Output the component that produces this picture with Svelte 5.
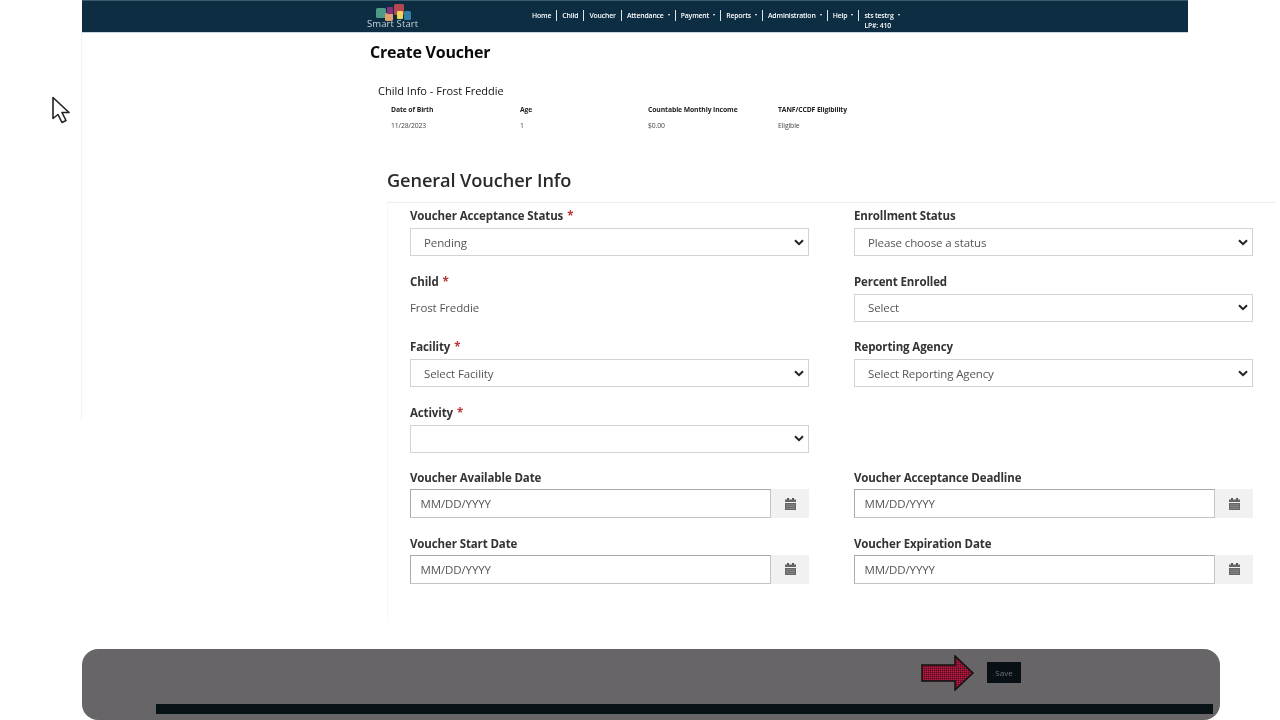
<script>
	const navItems = [
		{ name: "Home" },
		{ name: "Child" },
		{ name: "Voucher" },
		{ name: "Attendance", menu: true },
		{ name: "Payment", menu: true },
		{ name: "Reports", menu: true },
		{ name: "Administration", menu: true },
		{ name: "Help", menu: true }
	];

	const childInfo = [
		{ label: "Date of Birth", value: "11/28/2023" },
		{ label: "Age", value: "1" },
		{ label: "Countable Monthly Income", value: "$0.00" },
		{ label: "TANF/CCDF Eligibility", value: "Eligible" }
	];

	const fields = [
		{ label: "Voucher Acceptance Status", required: true, type: "select", value: "Pending" },
		{ label: "Enrollment Status", type: "select", value: "Please choose a status" },
		{ label: "Child", required: true, type: "static", value: "Frost Freddie" },
		{ label: "Percent Enrolled", type: "select", value: "Select" },
		{ label: "Facility", required: true, type: "select", value: "Select Facility" },
		{ label: "Reporting Agency", type: "select", value: "Select Reporting Agency" },
		{ label: "Activity", required: true, type: "select", value: "" },
		{ type: "empty" },
		{ label: "Voucher Available Date", type: "date" },
		{ label: "Voucher Acceptance Deadline", type: "date" },
		{ label: "Voucher Start Date", type: "date" },
		{ label: "Voucher Expiration Date", type: "date" }
	];
</script>

<div class="page">
	<header class="topbar">
		<div class="logo">
			<svg width="46" height="17" viewBox="0 0 46 17">
				<rect x="9" y="4" width="10" height="10" rx="1.5" fill="#4f9a86" />
				<rect x="18" y="9" width="8" height="8" rx="1.5" fill="#e0a070" />
				<rect x="20" y="3" width="6" height="7" rx="1" fill="#8a2f78" />
				<rect x="27" y="0" width="10" height="11" rx="1.5" fill="#b5474f" />
				<rect x="30" y="7" width="6" height="8" rx="1" fill="#e8d860" />
				<rect x="37" y="7" width="7" height="9" rx="1.5" fill="#2f7fa6" />
			</svg>
			<span>Smart Start</span>
		</div>
		<nav class="nav">
			{#each navItems as item}
				<span class="navitem">{item.name}{#if item.menu}<i class="caret"></i>{/if}</span>
			{/each}
			<div class="user">
				<span>sts testrg<i class="caret"></i></span>
				<span>LP#: 410</span>
			</div>
		</nav>
	</header>

	<main class="content">
		<h1>Create Voucher</h1>

		<section class="child">
			<h2>Child Info - Frost Freddie</h2>
			<div class="infotable">
				{#each childInfo as col}
					<div class="infocol">
						<b>{col.label}</b>
						<span>{col.value}</span>
					</div>
				{/each}
			</div>
		</section>

		<section class="general">
			<h3>General Voucher Info</h3>
			<div class="formgrid">
				{#each fields as f}
					<div class="field">
						{#if f.label}
							<label>{f.label}{#if f.required}<em>*</em>{/if}</label>
						{/if}
						{#if f.type == "select"}
							<div class="select">
								<span>{f.value}</span>
								<svg width="10" height="7" viewBox="0 0 10 7"><path d="M1 1.2 5 5.2 9 1.2" fill="none" stroke="#222" stroke-width="2" /></svg>
							</div>
						{:else if f.type == "static"}
							<div class="static">{f.value}</div>
						{:else if f.type == "date"}
							<div class="date">
								<div class="dateinput">MM/DD/YYYY</div>
								<div class="dateaddon">
									<svg width="11" height="12" viewBox="0 0 11 12">
										<path d="M2 0h2v2H2zM7 0h2v2H7z" fill="#555" />
										<path d="M0 1.5h11V4H0zM0 5h11v7H0z" fill="#666" />
										<path d="M1 6.8h9M1 8.6h9M1 10.4h9" stroke="#aaa" stroke-width=".5" />
									</svg>
								</div>
							</div>
						{/if}
					</div>
				{/each}
			</div>
		</section>
	</main>

	<svg class="pointer" width="20" height="30" viewBox="0 0 20 30">
		<path d="M2 1.5V22.5L7 18.5 11 26.5 15 24.5 11 16.5 18 16.5Z" fill="#fff" stroke="#222" stroke-width="1.6" stroke-linejoin="round" />
	</svg>

	<div class="overlay">
		<div class="savewrap">
			<svg class="arrow" width="54" height="36" viewBox="0 0 54 36">
				<defs>
					<pattern id="dots" width="2" height="2" patternUnits="userSpaceOnUse">
						<rect width="2" height="2" fill="#3a0a18" />
						<rect width="1.5" height="1.5" fill="#c41a44" />
					</pattern>
				</defs>
				<path d="M1 10H34V1L52 18 34 35V26H1Z" fill="url(#dots)" stroke="#111" stroke-width="1.5" />
			</svg>
			<div class="save">Save</div>
		</div>
		<div class="strip"></div>
	</div>
</div>

<style>
	:global(body) {
		margin: 0;
		background: #fff;
	}

	.page {
		position: relative;
		width: 1280px;
		height: 720px;
		overflow: hidden;
		background: #fff;
		font-family: "Open Sans", "Noto Sans", sans-serif;
		color: #222;
		filter: blur(0.3px);
	}

	.page::before {
		content: "";
		position: absolute;
		left: 81px;
		top: 32px;
		height: 388px;
		border-left: 1px solid #f3f3f3;
	}

	.topbar {
		display: flex;
		align-items: center;
		box-sizing: border-box;
		width: 1106px;
		height: 33px;
		margin-left: 82px;
		padding-left: 285px;
		background: #0c2d42;
		border-top: 1px solid #3d5a6c;
		border-bottom: 1px solid #c9d6e0;
		color: #fff;
	}

	.logo {
		display: flex;
		flex-direction: column;
		width: 51px;
		margin-top: -2px;
		font-size: 9.5px;
		line-height: 9px;
		color: #c8d2d8;
		letter-spacing: 0.1px;
		white-space: nowrap;
	}

	.logo svg {
		margin-bottom: -2px;
	}

	.nav {
		display: flex;
		align-items: center;
		margin-left: 109px;
		margin-top: -1px;
		font-size: 6.9px;
		font-weight: 600;
		letter-spacing: -0.16px;
		white-space: nowrap;
	}

	.navitem {
		margin-bottom: 2px;
		padding: 0 5px;
		border-right: 1px solid #dfe5e8;
		line-height: 11px;
	}

	.caret {
		display: inline-block;
		margin-left: 4px;
		vertical-align: 2px;
		border: 1.5px solid transparent;
		border-top: 2px solid #fff;
		border-bottom: 0;
	}

	.user {
		display: flex;
		flex-direction: column;
		margin-left: 5px;
		margin-top: 9px;
		line-height: 10px;
		font-size: 6.9px;
	}

	.content {
		margin-left: 370px;
	}

	h1 {
		margin: 8px 0 0;
		font-size: 16px;
		line-height: 22px;
		font-weight: 700;
		color: #0a0a0a;
		letter-spacing: -0.22px;
	}

	.child {
		margin: 20px 0 0 8px;
	}

	h2 {
		margin: 0;
		font-size: 11px;
		line-height: 16px;
		font-weight: 400;
		color: #111;
	}

	.infotable {
		display: grid;
		grid-template-columns: 129px 128px 130px 130px;
		margin: 6px 0 0 13px;
		font-size: 6.8px;
		letter-spacing: -0.1px;
	}

	.infocol {
		display: flex;
		flex-direction: column;
		gap: 6px;
		line-height: 10px;
	}

	.infocol span {
		color: #444;
	}

	.general {
		margin: 37px 0 0 17px;
		width: 889px;
	}

	h3 {
		margin: 0;
		padding-bottom: 10px;
		border-bottom: 1px solid #eee;
		font-size: 18.2px;
		line-height: 24px;
		font-weight: 600;
		color: #2a2a2a;
		letter-spacing: -0.1px;
	}

	.formgrid {
		display: grid;
		grid-template-columns: 399px 399px;
		grid-auto-rows: 65.5px;
		column-gap: 45px;
		padding: 5px 0 20px 22px;
		border-left: 1px solid #f7f7f7;
	}

	.field {
		display: flex;
		flex-direction: column;
	}

	label {
		font-size: 11.5px;
		line-height: 16px;
		font-weight: 700;
		color: #333;
		letter-spacing: -0.12px;
	}

	em {
		margin-left: 4px;
		color: #b33;
		font-style: normal;
	}

	.select {
		display: flex;
		align-items: center;
		justify-content: space-between;
		box-sizing: border-box;
		height: 28px;
		margin-top: 4px;
		padding: 0 4px 0 13px;
		background: #fff;
		border: 1px solid #d3d3d3;
		font-size: 11.5px;
		color: #555;
		letter-spacing: -0.12px;
	}

	.static {
		margin-top: 10px;
		font-size: 11.5px;
		line-height: 16px;
		color: #555;
		letter-spacing: -0.12px;
	}

	.date {
		display: flex;
		height: 29px;
		margin-top: 3px;
	}

	.dateinput {
		display: flex;
		align-items: center;
		box-sizing: border-box;
		width: 361px;
		padding-left: 9.5px;
		border: 1.5px solid #c4c4c4;
		border-top-color: #aaa;
		border-left-color: #aaa;
		font-size: 11.5px;
		color: #555;
		letter-spacing: -0.12px;
	}

	.dateaddon {
		display: flex;
		flex: 1;
		align-items: center;
		justify-content: center;
		background: #f1f1f1;
	}

	.pointer {
		position: absolute;
		left: 51px;
		top: 96px;
	}

	.overlay {
		position: absolute;
		left: 82px;
		top: 649px;
		box-sizing: border-box;
		width: 1138px;
		height: 71px;
		padding: 5px 7px 0 74px;
		background: #676567;
		border-radius: 16px;
	}

	.savewrap {
		display: flex;
		align-items: center;
		justify-content: flex-end;
		height: 37px;
		padding-right: 192px;
	}

	.arrow {
		margin-right: 12px;
	}

	.save {
		display: flex;
		align-items: center;
		justify-content: center;
		width: 34px;
		height: 21px;
		background: #081015;
		font-size: 8px;
		color: #71757a;
	}

	.strip {
		height: 10px;
		margin-top: 13px;
		background: #071216;
	}
</style>
